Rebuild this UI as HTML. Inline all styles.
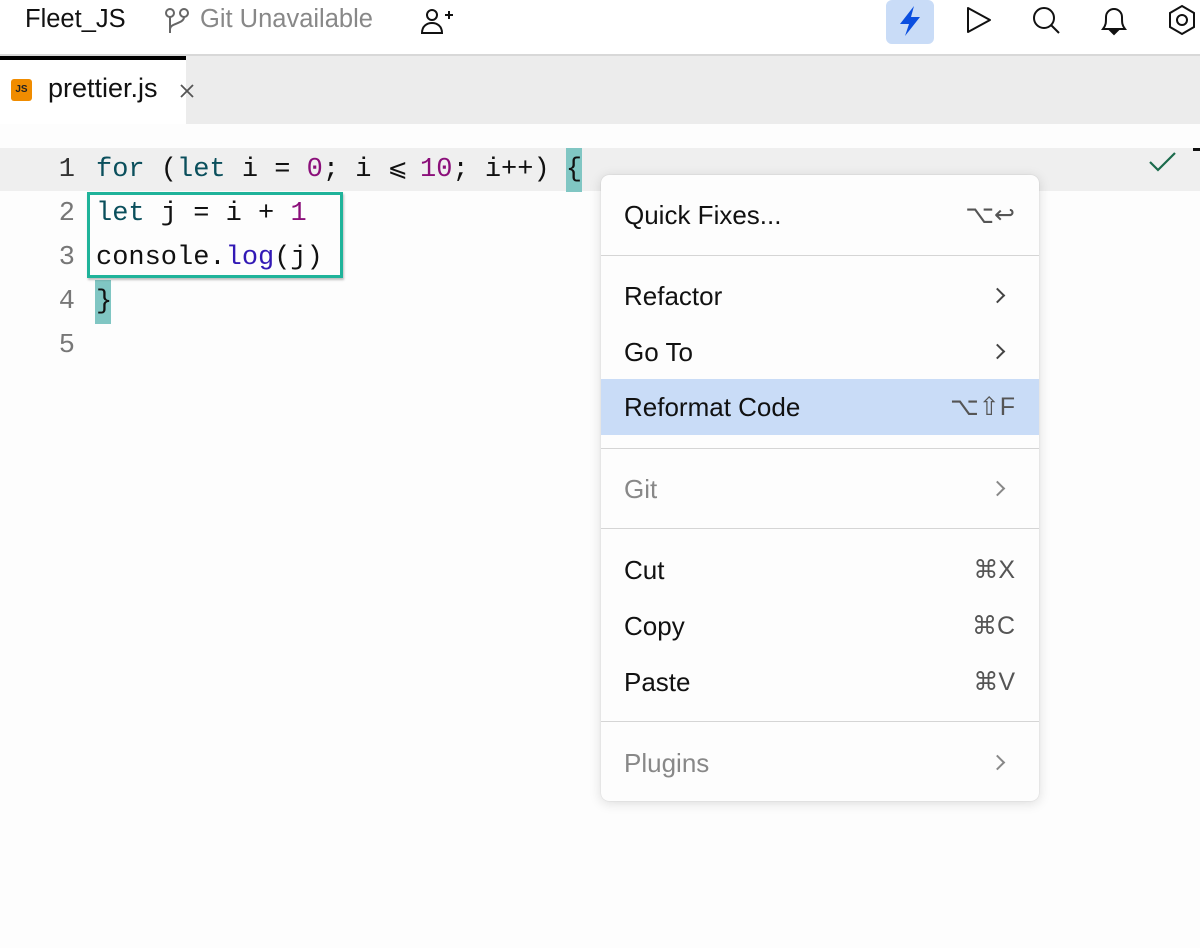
<!DOCTYPE html>
<html><head><meta charset="utf-8"><style>
*{margin:0;padding:0;box-sizing:border-box}
body{width:1200px;height:948px;background:#fdfdfd;position:relative;overflow:hidden;font-family:"Liberation Sans","DejaVu Sans",sans-serif}
.a{position:absolute}
.code{font-family:"Liberation Mono","DejaVu Sans Mono",monospace;font-size:27px;color:#111;white-space:pre;line-height:46px}
.le{display:inline-block;width:16.2px;text-align:center;font-size:24px}
.ln{font-family:"Liberation Mono",monospace;font-size:27px;color:#777;width:42px;text-align:right;left:33px;line-height:46px}
.mi{position:absolute;left:0;width:438px;height:56px;line-height:58px;font-size:26px;color:#111;padding-left:23px}
.mi .k{position:absolute;right:24px;top:0;color:#555;font-size:25px}
.sep{position:absolute;left:0;width:438px;height:1px;background:#d5d5d5}
.chev{position:absolute;right:36px;top:23px;width:11px;height:11px;border-right:2px solid #444;border-top:2px solid #444;transform:rotate(45deg)}
</style></head><body>
<div class="a" style="left:0;top:0;width:1200px;height:54px;background:#fff"></div>
<div class="a" style="left:25px;top:5px;font-size:25.5px;color:#111">Fleet_JS</div>
<svg class="a" style="left:162px;top:6px" width="30" height="30" viewBox="0 0 30 30" fill="none" stroke="#666" stroke-width="2"><circle cx="8" cy="7" r="4"/><circle cx="22" cy="7" r="4"/><path d="M8 11v16M22 11c0 7-14 6-14 12"/></svg>
<div class="a" style="left:200px;top:5px;font-size:25.5px;color:#888">Git Unavailable</div>
<svg class="a" style="left:418px;top:6px" width="36" height="30" viewBox="0 0 36 30" fill="none" stroke="#111" stroke-width="2"><circle cx="14" cy="9" r="5"/><path d="M4 27c0-7 5-10 10-10s10 3 10 10z"/><path d="M27 9h8M31 5v8"/></svg>
<div class="a" style="left:886px;top:0;width:48px;height:44px;background:#c9dcf7;border-radius:6px"></div>
<svg class="a" style="left:896px;top:4px" width="28" height="34" viewBox="0 0 28 34"><path d="M18 2L4 20h9l-4 12 15-19h-9z" fill="#0b4fe0"/></svg>
<svg class="a" style="left:964px;top:5px" width="30" height="30" viewBox="0 0 30 30" fill="none" stroke="#111" stroke-width="2"><path d="M4 3v24l22-12z" stroke-linejoin="round"/></svg>
<svg class="a" style="left:1030px;top:4px" width="32" height="32" viewBox="0 0 32 32" fill="none" stroke="#111" stroke-width="2"><circle cx="14" cy="14" r="10"/><path d="M21 21l8 8"/></svg>
<svg class="a" style="left:1099px;top:4px" width="30" height="32" viewBox="0 0 30 32" fill="none" stroke="#111" stroke-width="2"><path d="M4 25c3-4 3-6 3-12a8 8 0 0 1 16 0c0 6 0 8 3 12z"/><path d="M12 27h6l-3 3z" fill="#111"/></svg>
<svg class="a" style="left:1166px;top:4px" width="32" height="32" viewBox="0 0 32 32" fill="none" stroke="#111" stroke-width="2"><path d="M16 2l12 7v14l-12 7-12-7V9z"/><circle cx="16" cy="16" r="5"/></svg>
<div class="a" style="left:0;top:54px;width:1200px;height:2px;background:#d8d8d8"></div>
<div class="a" style="left:0;top:56px;width:1200px;height:68px;background:#ececec"></div>
<div class="a" style="left:0;top:56px;width:186px;height:68px;background:#fff;border-top:4px solid #000"></div>
<div class="a" style="left:11px;top:79px;width:21px;height:22px;background:#f08c00;border-radius:3px;font-size:10px;font-weight:bold;color:#222;text-align:center;line-height:22px">JS</div>
<div class="a" style="left:48px;top:73px;font-size:27px;color:#111">prettier.js</div>
<svg class="a" style="left:179px;top:83px" width="16" height="16" viewBox="0 0 16 16" stroke="#555" stroke-width="1.8"><path d="M2 2l12 12M14 2L2 14"/></svg>
<div class="a" style="left:0;top:148px;width:1200px;height:43px;background:#efefef"></div>
<svg class="a" style="left:1148px;top:150px" width="30" height="24" viewBox="0 0 30 24" fill="none" stroke="#1b6b4c" stroke-width="2.2"><path d="M2 12l8 8L27 3"/></svg>
<div class="a" style="left:1193px;top:148px;width:7px;height:3px;background:#111"></div>
<div class="a ln" style="top:147px;color:#333">1</div>
<div class="a ln" style="top:191px">2</div>
<div class="a ln" style="top:235px">3</div>
<div class="a ln" style="top:279px">4</div>
<div class="a ln" style="top:323px">5</div>
<div class="a" style="left:566px;top:148px;width:16px;height:44px;background:#80c6c3"></div>
<div class="a" style="left:95px;top:280px;width:16px;height:44px;background:#80c6c3"></div>
<div class="a code" style="left:96px;top:147px"><span style="color:#0a4f5c">for</span> (<span style="color:#0a4f5c">let</span> i = <span style="color:#8b0f7a">0</span>; i <span class="le">⩽</span> <span style="color:#8b0f7a">10</span>; i++) {</div>
<div class="a code" style="left:96px;top:191px"><span style="color:#0a4f5c">let</span> j = i + <span style="color:#8b0f7a">1</span></div>
<div class="a code" style="left:96px;top:235px">console.<span style="color:#3219b5">log</span>(j)</div>
<div class="a code" style="left:96px;top:279px">}</div>
<div class="a" style="left:87px;top:192px;width:256px;height:86px;border:3px solid #1fb39a;box-shadow:1px 2px 2px rgba(0,0,0,.25)"></div>
<div class="a" style="left:601px;top:175px;width:438px;height:626px;background:#fdfdfd;border-radius:8px;box-shadow:0 2px 12px rgba(0,0,0,.14),0 0 1px rgba(0,0,0,.2);overflow:hidden">
<div class="mi" style="top:11px">Quick Fixes...<span class="k">⌥↩</span></div>
<div class="sep" style="top:80px"></div>
<div class="mi" style="top:92px">Refactor<span class="chev"></span></div>
<div class="mi" style="top:148px">Go To<span class="chev"></span></div>
<div class="mi" style="top:204px;background:#c9dcf7;line-height:56px">Reformat Code<span class="k">⌥⇧F</span></div>
<div class="sep" style="top:273px"></div>
<div class="mi" style="top:285px;color:#888">Git<span class="chev" style="border-color:#888"></span></div>
<div class="sep" style="top:353px"></div>
<div class="mi" style="top:366px">Cut<span class="k">⌘X</span></div>
<div class="mi" style="top:422px">Copy<span class="k">⌘C</span></div>
<div class="mi" style="top:478px">Paste<span class="k">⌘V</span></div>
<div class="sep" style="top:546px"></div>
<div class="mi" style="top:559px;color:#888">Plugins<span class="chev" style="border-color:#888"></span></div>
</div>
</body></html>
